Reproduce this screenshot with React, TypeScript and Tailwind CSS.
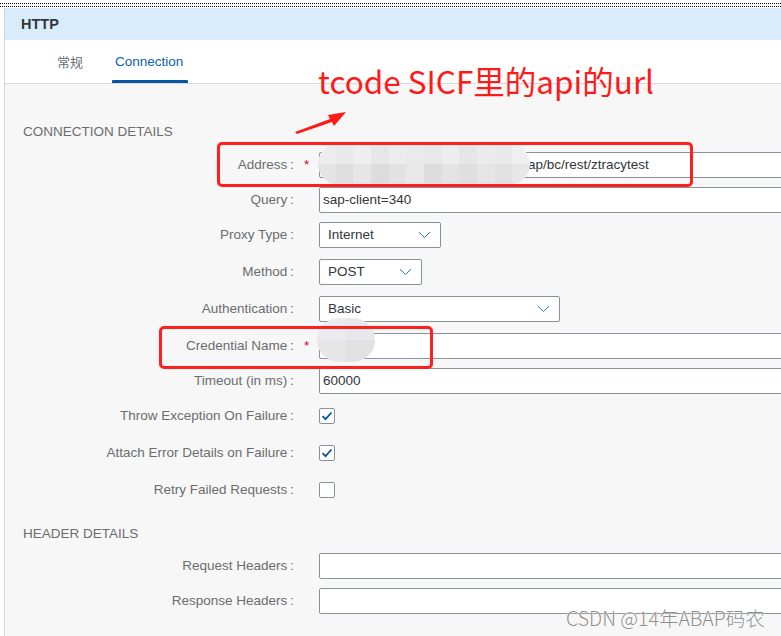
import React from 'react'

const font = "font-['Liberation_Sans',Arial,sans-serif]"

function Chevron() {
  return (
    <svg width="13" height="8" viewBox="0 0 13 8" fill="none">
      <path d="M1 1.2L6.5 6.5L12 1.2" stroke="#2f73c2" strokeWidth="1" />
    </svg>
  )
}

function Check({ on }: { on?: boolean }) {
  return (
    <div className="flex h-[16px] w-[16px] items-center justify-center rounded-[2px] border border-[#89919a] bg-white">
      {on && (
        <svg width="12" height="10" viewBox="0 0 12 10" fill="none">
          <path d="M1.5 5.2L4.5 8.2L10.5 1.5" stroke="#0854a0" strokeWidth="1.8" />
        </svg>
      )}
    </div>
  )
}

function Row({
  label,
  required,
  mt,
  children,
}: {
  label: string
  required?: boolean
  mt: string
  children: React.ReactNode
}) {
  return (
    <div className={`flex h-[26px] items-center ${mt}`}>
      <div className="w-[294px] shrink-0 text-right text-[#6a6d70]">
        {label}
        <span className="ml-[3px]">:</span>
      </div>
      <div className="w-[25px] shrink-0 pl-[10px] text-[#d0021b]">{required ? '*' : ''}</div>
      {children}
    </div>
  )
}

const inputCls =
  'flex h-[26px] w-[480px] shrink-0 items-center rounded-[2px] border border-[#89919a] bg-white px-[3px] text-[#32363a]'

function Select({ value, w }: { value: string; w: string }) {
  return (
    <div
      className={`flex h-[26px] ${w} shrink-0 items-center justify-between rounded-[2px] border border-[#89919a] bg-white pl-[8px] pr-[9px] text-[#32363a]`}
    >
      <span>{value}</span>
      <Chevron />
    </div>
  )
}

const mosaicTop = ['bg-[#ececee]', 'bg-[#e9e9eb]', 'bg-[#eeeef0]', 'bg-[#e7e7e9]', 'bg-[#ececee]', 'bg-[#eaeaec]', 'bg-[#e8e8ea]', 'bg-[#ededef]', 'bg-[#e6e6e8]', 'bg-[#ebebed]', 'bg-[#e9e9eb]', 'bg-[#efeff1]']
const mosaicBottom = ['bg-[#e4e4e6]', 'bg-[#dedee0]', 'bg-[#e6e6e8]', 'bg-[#dcdcde]', 'bg-[#e2e2e4]', 'bg-[#e8e8ea]', 'bg-[#dddddf]', 'bg-[#e3e3e5]', 'bg-[#dfdfe1]', 'bg-[#e5e5e7]', 'bg-[#e1e1e3]', 'bg-[#e7e7e9]']

export default function App() {
  return (
    <div className={`relative h-[636px] w-[781px] overflow-hidden bg-white text-[13.5px] ${font}`}>
      {/* top strip */}
      <div className="h-[8px] bg-white">
        <div className="pt-[3px]">
          <div className="border-t border-dotted border-black" />
          <div className="mt-[2px] border-t border-dotted border-black" />
        </div>
      </div>

      <div className="ml-[4px] flex h-[628px] flex-col border-l border-[#d4d4d4]">
        {/* header */}
        <div className="flex h-[32px] items-center bg-[#d9ecfc] pl-[16px] pt-[2px] text-[14.5px] font-bold text-[#32363a]">
          HTTP
        </div>

        {/* tabs */}
        <div className="flex h-[44px] items-end border-b border-[#d9d9d9] bg-white pl-[52px]">
          <div className="flex h-full items-center pt-[1px] text-[#6a6d70] font-['Noto_Sans_CJK_SC',sans-serif] text-[13px]">
            常规
          </div>
          <div className="ml-[29px] flex h-full flex-col">
            <div className="flex flex-1 items-center px-[3px] pt-[4px] text-[#0a5fb4]">Connection</div>
            <div className="h-[3px] w-[76px] rounded-t-[1px] bg-[#0854a0]" />
          </div>
        </div>

        {/* content */}
        <div className="flex-1 bg-[#f7f7f7] pt-[40px]">
          <div className="pl-[18px] text-[13.5px] uppercase leading-[16px] text-[#6a6d70]">Connection Details</div>

          <div className="-ml-[5px]">
            <Row label="Address" required mt="mt-[12px]">
              <div className={inputCls}>
                <span className="pl-[205px]">ap/bc/rest/ztracytest</span>
              </div>
            </Row>
            <Row label="Query" mt="mt-[9px]">
              <div className={inputCls}>sap-client=340</div>
            </Row>
            <Row label="Proxy Type" mt="mt-[9px]">
              <Select value="Internet" w="w-[122px]" />
            </Row>
            <Row label="Method" mt="mt-[11px]">
              <Select value="POST" w="w-[103px]" />
            </Row>
            <Row label="Authentication" mt="mt-[11px]">
              <Select value="Basic" w="w-[241px]" />
            </Row>
            <Row label="Credential Name" required mt="mt-[11px]">
              <div className={inputCls} />
            </Row>
            <Row label="Timeout (in ms)" mt="mt-[9px]">
              <div className={inputCls}>60000</div>
            </Row>
            <Row label="Throw Exception On Failure" mt="mt-[9px]">
              <Check on />
            </Row>
            <Row label="Attach Error Details on Failure" mt="mt-[11px]">
              <Check on />
            </Row>
            <Row label="Retry Failed Requests" mt="mt-[11px]">
              <Check />
            </Row>
          </div>

          <div className="mt-[23px] pl-[18px] text-[13.5px] uppercase leading-[16px] text-[#6a6d70]">Header Details</div>
          <div className="-ml-[5px]">
            <Row label="Request Headers" mt="mt-[11px]">
              <div className={inputCls} />
            </Row>
            <Row label="Response Headers" mt="mt-[9px]">
              <div className={inputCls} />
            </Row>
          </div>
        </div>
      </div>

      {/* mosaic over the address */}
      <div className="absolute left-[318px] top-[143px] flex h-[42px] w-[212px] flex-col overflow-hidden rounded-[21px]">
        <div className="flex h-[21px]">
          {mosaicTop.map((c, i) => (
            <div key={i} className={`h-full flex-1 ${c}`} />
          ))}
        </div>
        <div className="flex h-[21px]">
          {mosaicBottom.map((c, i) => (
            <div key={i} className={`h-full flex-1 ${c}`} />
          ))}
        </div>
      </div>

      {/* mosaic over the credential name */}
      <div className="absolute left-[317px] top-[318px] grid h-[44px] w-[58px] grid-cols-2 overflow-hidden rounded-[22px]">
        <div className="bg-[#ebebed]" />
        <div className="bg-[#e8e8ea]" />
        <div className="bg-[#e6e6e8]" />
        <div className="bg-[#e1e1e3]" />
      </div>

      {/* annotation boxes */}
      <div className="absolute left-[217px] top-[142px] h-[45px] w-[476px] rounded-[5px] border-[3px] border-[#ff1f1f]" />
      <div className="absolute left-[159px] top-[326px] h-[43px] w-[274px] rounded-[5px] border-[3px] border-[#ff1f1f]" />

      {/* annotation text + arrow */}
      <div className="absolute left-[318px] top-[58px] font-['Noto_Sans_CJK_SC','Liberation_Sans',sans-serif] text-[31.5px] leading-[44px] text-[#ff1a1a]">
        tcode SICF里的api的url
      </div>
      <svg className="absolute left-[292px] top-[108px]" width="58" height="28" viewBox="0 0 58 28">
        <polygon points="3,24 38,11 36,7 54,4 42,18 40,14 5,26" fill="#ff1a1a" />
      </svg>

      {/* watermark */}
      <div className="absolute left-[566px] top-[604px] font-['Noto_Sans_CJK_SC','Liberation_Sans',sans-serif] text-[19.5px] font-light leading-[28px] text-[#8f8f8f] [text-shadow:0_0_1px_#fff,0_0_2px_#fff]">
        CSDN @14年ABAP码农
      </div>
    </div>
  )
}
